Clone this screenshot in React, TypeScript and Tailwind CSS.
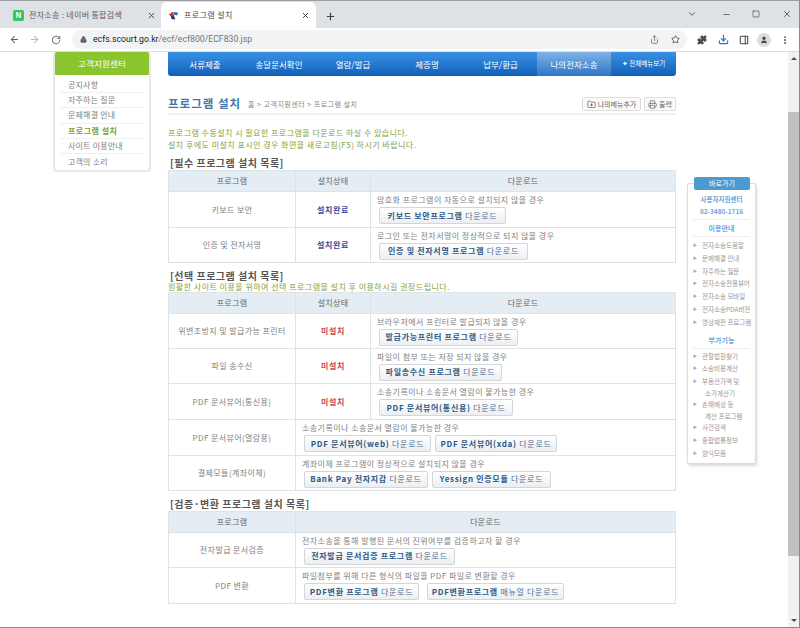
import { ArrowLeft, ArrowRight, RotateCw, Lock, Share, Star, Puzzle, Download, PanelRight, User, MoreVertical, ChevronDown, Minus, Square, X, Plus, Printer, FolderPlus } from 'lucide-react'

const sideMenu = ['공지사항', '자주하는 질문', '문제해결 안내', '프로그램 설치', '사이트 이용안내', '고객의 소리']
const navItems = [
  { label: '서류제출', width: 'w-[74px]' },
  { label: '송달문서확인', width: 'w-[74px]' },
  { label: '열람/발급', width: 'w-[74px]' },
  { label: '제증명', width: 'w-[74px]' },
  { label: '납부/환급', width: 'w-[73px]' },
]
const guideItems = ['전자소송도움말', '문제해결 안내', '자주하는 질문', '전자소송전용뷰어', '전자소송 모바일', '전자소송PDA버전', '영상재판 프로그램']
const extraItems = ['관할법원찾기', '소송비용계산', '부동산가액 및\n소가계산기', '손해배상 등\n계산 프로그램', '사건검색', '종합법률정보', '양식모음']

interface Btn {
  strong: string
  rest: string
  width: string
}

function DownloadButton({ strong, rest, width }: Btn) {
  return (
    <span className={`inline-flex h-[17px] shrink-0 items-center justify-center whitespace-nowrap rounded-[2px] border border-[#d2d6d9] bg-gradient-to-b from-white to-[#eceef0] text-[8px] tracking-[0.7px] text-[#4a7299] ${width}`}>
      <b className="text-[#2a5986]">{strong}</b>&nbsp;{rest}
    </span>
  )
}

function DownloadCell({ note, buttons, gap = 'gap-[4px]', span }: { note: string; buttons: Btn[]; gap?: string; span?: number }) {
  return (
    <td colSpan={span} className="border border-[#dfe3e6] pl-[6px] align-middle">
      <div className="whitespace-nowrap text-[8px] leading-[10px] tracking-[0.45px] text-[#808080]">{note}</div>
      <div className={`mt-[2px] ml-[2px] flex ${gap}`}>
        {buttons.map((b) => (
          <DownloadButton key={b.strong + b.rest} {...b} />
        ))}
      </div>
    </td>
  )
}

function HeadCell({ children, className = '' }: { children: React.ReactNode; className?: string }) {
  return <th className={`border border-[#dfe3e6] bg-[#e4ecf4] text-center text-[8px] font-normal tracking-[0.3px] text-[#666] ${className}`}>{children}</th>
}

function NameCell({ children }: { children: React.ReactNode }) {
  return <td className="border border-[#dfe3e6] text-center text-[8px] tracking-[0.4px] text-[#808080]">{children}</td>
}

function StatusCell({ done }: { done: boolean }) {
  return (
    <td className={`border border-[#dfe3e6] text-center text-[8px] font-bold tracking-[0.6px] ${done ? 'text-[#3a4a9e]' : 'text-[#cc4650]'}`}>
      {done ? '설치완료' : '미설치'}
    </td>
  )
}

function SectionTitle({ children }: { children: React.ReactNode }) {
  return <div className="pl-[2px] text-[10px] leading-[12px] font-bold tracking-[0.5px] text-[#555]">{children}</div>
}

function Tabs() {
  return (
    <div className="flex h-[28px] items-end border-t border-[#9a9c9f] bg-[#dee1e6] pl-[8px]">
      <div className="flex h-[26px] w-[153px] items-center pl-[5px] pr-[5px]">
        <span className="flex h-[11px] w-[11px] items-center justify-center rounded-[2px] bg-[#2fc75e] text-[8px] leading-none font-bold text-white">N</span>
        <span className="ml-[5px] flex-1 text-[8px] tracking-[0.3px] text-[#5a5e63]">전자소송 : 네이버 통합검색</span>
        <X size={9} strokeWidth={2.5} className="text-[#45494e]" />
      </div>
      <div className="flex h-[26px] w-[155px] items-center rounded-t-[6px] bg-white pl-[7px] pr-[6px]">
        <svg width="11" height="11" viewBox="0 0 12 12">
          <path d="M1 5l4-3 1 3-3 2z" fill="#c33" />
          <path d="M6 2l5 1-1 3-4-1z" fill="#2a6fb0" />
          <path d="M3 7l3-2 2 5H4z" fill="#23395d" />
        </svg>
        <span className="ml-[5px] flex-1 text-[8px] tracking-[0.4px] text-[#4a4e52]">프로그램 설치</span>
        <X size={9} strokeWidth={2.5} className="text-[#3c4043]" />
      </div>
      <Plus size={11} strokeWidth={2.5} className="mb-[6px] ml-[9px] text-[#3c4043]" />
      <div className="mb-[9px] ml-auto flex items-center text-[#45494e]">
        <ChevronDown size={10} className="mr-[25px]" />
        <Minus size={9} className="mr-[21px]" />
        <Square size={8} strokeWidth={2} className="mr-[22px]" />
        <X size={10} className="mr-[7px]" />
      </div>
    </div>
  )
}

function Toolbar() {
  return (
    <div className="flex h-[24px] items-center border-b border-[#dadce0] bg-white text-[#5f6368]">
      <ArrowLeft size={11} strokeWidth={2.2} className="ml-[9px]" />
      <ArrowRight size={11} strokeWidth={2.2} className="ml-[9px] text-[#b5b8bb]" />
      <RotateCw size={10} strokeWidth={2.2} className="ml-[11px]" />
      <div className="ml-[11px] flex h-[19px] w-[615px] shrink-0 items-center rounded-full bg-[#f1f3f4] pl-[8px]">
        <Lock size={7} fill="currentColor" />
        <span className="ml-[6px] flex-1 font-['Roboto',sans-serif] text-[8.7px] text-[#70757a]">
          <span className="text-[#202124]">ecfs.scourt.go.kr</span>/ecf/ecf800/ECF830.jsp
        </span>
        <Share size={9} className="mr-[12px]" />
        <Star size={9} strokeWidth={2.2} className="mr-[7px] text-[#45494e]" />
      </div>
      <Puzzle size={10} fill="currentColor" className="ml-[10px] shrink-0 text-[#45494e]" />
      <Download size={11} strokeWidth={2.5} className="ml-[11px] shrink-0 text-[#1a73e8]" />
      <PanelRight size={10} strokeWidth={2.5} className="ml-[10px] shrink-0 text-[#45494e]" />
      <span className="ml-[8px] flex h-[14px] w-[14px] shrink-0 items-center justify-center rounded-full bg-[#dadce0]">
        <User size={8} fill="currentColor" className="text-[#45494e]" />
      </span>
      <MoreVertical size={10} strokeWidth={2.5} className="ml-[9px] shrink-0 text-[#45494e]" />
    </div>
  )
}

function SideBar() {
  return (
    <aside className="h-[120px] w-[98px] shrink-0 overflow-hidden rounded-b-[4px] rounded-t-[3px] border-2 border-t-0 border-[#e6e7e8] bg-white">
      <div className="-mx-[2px] flex h-[23px] items-center justify-center bg-[#8bc52e] text-[8.5px] tracking-[0.2px] text-white">고객지원센터</div>
      <ul className="px-[5px] pt-[3px]">
        {sideMenu.map((m, i) => (
          <li
            key={m}
            className={`flex h-[15.2px] items-center border-b border-[#f0f0f0] pl-[8px] text-[8px] tracking-[0.2px] last:border-0 ${i === 3 ? 'font-bold tracking-[0.5px] text-[#7ba32c]' : 'text-[#808080]'}`}
          >
            {m}
          </li>
        ))}
      </ul>
    </aside>
  )
}

function TopNav() {
  return (
    <nav className="flex h-[24px] items-center rounded-b-[3px] bg-gradient-to-b from-[#3a92e4] to-[#0f5fba] text-[8.5px] text-white">
      {navItems.map((n) => (
        <span key={n.label} className={`text-center ${n.width}`}>{n.label}</span>
      ))}
      <span className="flex h-full w-[74px] items-center justify-center bg-gradient-to-b from-[#7fb3e6] to-[#2c75c6]">나의전자소송</span>
      <span className="flex-1 text-center text-[6.5px]">✦ 전체메뉴보기</span>
    </nav>
  )
}

function WideHead({ name, download }: { name: string; download: string }) {
  return (
    <tr className="h-[21px]">
      <HeadCell>{name}</HeadCell>
      <HeadCell>{download}</HeadCell>
    </tr>
  )
}

function StatusHead() {
  return (
    <tr className="h-[21px]">
      <HeadCell>프로그램</HeadCell>
      <HeadCell>설치상태</HeadCell>
      <HeadCell>다운로드</HeadCell>
    </tr>
  )
}

function Content() {
  return (
    <main className="w-[508px] shrink-0">
      <TopNav />
      <div className="mt-[19px] flex h-[20px] items-center border-b-2 border-[#f1f1f1]">
        <h1 className="text-[11.5px] font-bold tracking-[1px] text-[#3f78aa]">프로그램 설치</h1>
        <span className="ml-[7px] text-[7px] tracking-[0.5px] text-[#888]">홈 &gt; 고객지원센터 &gt; 프로그램 설치</span>
        <div className="ml-auto flex gap-[3px]">
          <span className="flex h-[14px] w-[59px] items-center justify-center gap-[2px] rounded-[2px] border border-[#ddd] bg-[#fafafa] text-[7px] text-[#666]">
            <FolderPlus size={9} />나의메뉴추가
          </span>
          <span className="flex h-[14px] w-[32px] items-center justify-center gap-[2px] rounded-[2px] border border-[#ddd] bg-[#fafafa] text-[7px] text-[#666]">
            <Printer size={9} />출력
          </span>
        </div>
      </div>
      <p className="mt-[12px] text-[8px] leading-[11.5px] tracking-[0.47px] text-[#86a13c]">
        프로그램 수동설치 시 필요한 프로그램을 다운로드 하실 수 있습니다.
        <br />
        설치 후에도 미설치 표시인 경우 화면을 새로고침(F5) 하시기 바랍니다.
      </p>

      <div className="mt-[7px]"><SectionTitle>[필수 프로그램 설치 목록]</SectionTitle></div>
      <table className="mt-[1px] w-full table-fixed border-collapse">
        <colgroup><col className="w-[127px]" /><col className="w-[75px]" /><col /></colgroup>
        <tbody>
          <StatusHead />
          <tr className="h-[36px]">
            <NameCell>키보드 보안</NameCell>
            <StatusCell done />
            <DownloadCell note="암호화 프로그램이 자동으로 설치되지 않을 경우" buttons={[{ strong: '키보드 보안프로그램', rest: '다운로드', width: 'w-[127px]' }]} />
          </tr>
          <tr className="h-[35px]">
            <NameCell>인증 및 전자서명</NameCell>
            <StatusCell done />
            <DownloadCell note="로그인 또는 전자서명이 정상적으로 되지 않을 경우" buttons={[{ strong: '인증 및 전자서명 프로그램', rest: '다운로드', width: 'w-[149px]' }]} />
          </tr>
        </tbody>
      </table>

      <div className="mt-[7px]"><SectionTitle>[선택 프로그램 설치 목록]</SectionTitle></div>
      <div className="text-[8px] leading-[9px] tracking-[0.48px] text-[#86a13c]">원활한 사이트 이용을 위하여 선택 프로그램을 설치 후 이용하시길 권장드립니다.</div>
      <table className="mt-[1px] w-full table-fixed border-collapse">
        <colgroup><col className="w-[127px]" /><col className="w-[75px]" /><col /></colgroup>
        <tbody>
          <StatusHead />
          <tr className="h-[35px]">
            <NameCell>위변조방지 및 발급가능 프린터</NameCell>
            <StatusCell done={false} />
            <DownloadCell note="브라우저에서 프린터로 발급되지 않을 경우" buttons={[{ strong: '발급가능프린터 프로그램', rest: '다운로드', width: 'w-[139px]' }]} />
          </tr>
          <tr className="h-[35px]">
            <NameCell>파일 송수신</NameCell>
            <StatusCell done={false} />
            <DownloadCell note="파일이 첨부 또는 저장 되지 않을 경우" buttons={[{ strong: '파일송수신 프로그램', rest: '다운로드', width: 'w-[123px]' }]} />
          </tr>
          <tr className="h-[36px]">
            <NameCell>PDF 문서뷰어(통신용)</NameCell>
            <StatusCell done={false} />
            <DownloadCell note="소송기록이나 소송문서 열람이 불가능한 경우" buttons={[{ strong: 'PDF 문서뷰어(통신용)', rest: '다운로드', width: 'w-[134px]' }]} />
          </tr>
          <tr className="h-[36px]">
            <NameCell>PDF 문서뷰어(열람용)</NameCell>
            <DownloadCell
              span={2}
              note="소송기록이나 소송문서 열람이 불가능한 경우"
              buttons={[
                { strong: 'PDF 문서뷰어(web)', rest: '다운로드', width: 'w-[127px]' },
                { strong: 'PDF 문서뷰어(xda)', rest: '다운로드', width: 'w-[122px]' },
              ]}
            />
          </tr>
          <tr className="h-[35px]">
            <NameCell>결제모듈(계좌이체)</NameCell>
            <DownloadCell
              span={2}
              note="계좌이체 프로그램이 정상적으로 설치되지 않을 경우"
              buttons={[
                { strong: 'Bank Pay 전자지갑', rest: '다운로드', width: 'w-[124px]' },
                { strong: 'Yessign 인증모듈', rest: '다운로드', width: 'w-[119px]' },
              ]}
            />
          </tr>
        </tbody>
      </table>

      <div className="mt-[7px]"><SectionTitle>[검증·변환 프로그램 설치 목록]</SectionTitle></div>
      <table className="mt-[1px] w-full table-fixed border-collapse">
        <colgroup><col className="w-[127px]" /><col /></colgroup>
        <tbody>
          <WideHead name="프로그램" download="다운로드" />
          <tr className="h-[35px]">
            <NameCell>전자발급 문서검증</NameCell>
            <DownloadCell note="전자소송을 통해 발행된 문서의 진위여부를 검증하고자 할 경우" buttons={[{ strong: '전자발급 문서검증 프로그램', rest: '다운로드', width: 'w-[151px]' }]} />
          </tr>
          <tr className="h-[36px]">
            <NameCell>PDF 변환</NameCell>
            <DownloadCell
              note="파일첨부를 위해 다른 형식의 파일을 PDF 파일로 변환할 경우"
              buttons={[
                { strong: 'PDF변환 프로그램', rest: '다운로드', width: 'w-[115px]' },
                { strong: 'PDF변환프로그램', rest: '매뉴얼 다운로드', width: 'w-[137px]' },
              ]}
              gap="gap-[8px]"
            />
          </tr>
        </tbody>
      </table>
    </main>
  )
}

function WidgetList({ items }: { items: string[] }) {
  return (
    <ul className="pl-[5px] text-[6.5px] text-[#999]">
      {items.map((t) => {
        const [first, second] = t.split('\n')
        return (
          <li key={t} className="flex leading-[12.8px]">
            <span className="mr-[4px] w-[5px] text-[4px] text-[#aaa]">▶</span>
            <div>
              {first}
              {second && <div className="-mt-[1px] -mb-[1.6px] pl-[3px]">{second}</div>}
            </div>
          </li>
        )
      })}
    </ul>
  )
}

function QuickLinks() {
  return (
    <aside className="relative mt-[131px] h-[281px] w-[69px] shrink-0 rounded-[2px] border border-[#dcdcdc] bg-white shadow-[1px_2px_3px_rgba(0,0,0,0.15)]">
      <div className="absolute -top-[7px] left-[6px] flex h-[13px] w-[56px] items-center justify-center rounded-[2px] bg-[#4b9bd1] text-[7px] text-white">바로가기</div>
      <div className="mx-[5px] border-b border-[#eee] pt-[9px] pb-[2px] text-center text-[6.5px] leading-[12px] font-bold text-[#6ba6dc]">
        사용자지원센터
        <br />
        02-3480-1716
      </div>
      <div className="mx-[5px] mb-[2px] border-b border-[#eee] py-[2px] text-center text-[7px] leading-[12px] font-bold text-[#6ba6dc]">이용안내</div>
      <WidgetList items={guideItems} />
      <div className="mx-[5px] mt-[3px] mb-[1px] border-b border-[#eee] py-[2px] text-center text-[7px] leading-[12px] font-bold text-[#6ba6dc]">부가기능</div>
      <WidgetList items={extraItems} />
    </aside>
  )
}

function ScrollBar() {
  return (
    <div className="flex w-[11px] shrink-0 flex-col items-center bg-[#f1f1f1]">
      <span className="mt-[5px] h-0 w-0 border-x-[3px] border-b-[3px] border-x-transparent border-b-[#505050]" />
      <div className="mt-[52px] h-[444px] w-full bg-[#c1c1c1]" />
      <span className="mt-auto mb-[5px] h-0 w-0 border-x-[3px] border-t-[3px] border-x-transparent border-t-[#505050]" />
    </div>
  )
}

export default function App() {
  return (
    <div className="flex h-[628px] w-[800px] flex-col overflow-hidden border-r border-b border-[#8a8a8a] bg-white font-['Noto_Sans_CJK_KR','Noto_Sans',sans-serif]">
      <Tabs />
      <Toolbar />
      <div className="flex min-h-0 flex-1">
        <div className="flex flex-1 items-start pl-[53px]">
          <SideBar />
          <div className="ml-[17px]"><Content /></div>
          <div className="ml-[11px]"><QuickLinks /></div>
        </div>
        <ScrollBar />
      </div>
    </div>
  )
}
